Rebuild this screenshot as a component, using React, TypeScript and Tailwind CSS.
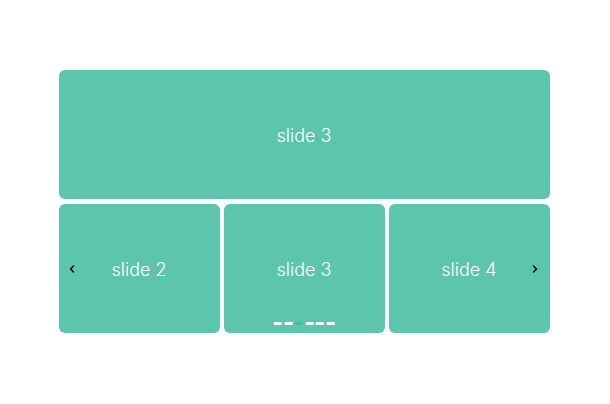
import { ChevronLeft, ChevronRight } from "lucide-react";

const bottomSlides = ["slide 2", "slide 3", "slide 4"];
const dots = [0, 1, 2, 3, 4, 5];
const active = 2;

export default function App() {
  return (
    <div
      className="flex h-[404px] w-[610px] flex-col items-center bg-white pt-[70px]"
      style={{ fontFamily: "Inter, 'Liberation Sans', sans-serif" }}
    >
      <div className="mr-[2px] flex w-[491px] flex-col gap-[5px]">
        {/* main slide */}
        <div className="flex h-[129px] items-center justify-center rounded-[6px] bg-[#5cc5ab] pt-[2px] text-[18px] font-light text-white">
          slide 3
        </div>

        {/* thumbnails */}
        <div className="relative grid h-[129px] grid-cols-3 gap-[4px]">
          {bottomSlides.map((s) => (
            <div
              key={s}
              className="flex items-center justify-center rounded-[6px] bg-[#5cc5ab] pt-[2px] text-[18px] font-light text-white"
            >
              {s}
            </div>
          ))}

          <button className="absolute left-[7px] top-1/2 -translate-y-1/2 text-black">
            <ChevronLeft size={12} strokeWidth={3} />
          </button>
          <button className="absolute right-[9px] top-1/2 -translate-y-1/2 text-black">
            <ChevronRight size={12} strokeWidth={3} />
          </button>

          <div className="absolute bottom-[8px] left-1/2 flex -translate-x-1/2 gap-[2.5px]">
            {dots.map((d) => (
              <span
                key={d}
                className={
                  d === active
                    ? "h-[3px] w-[8px] bg-[#4fb5a8]"
                    : "h-[3px] w-[8px] bg-white"
                }
              />
            ))}
          </div>
        </div>
      </div>
    </div>
  );
}
